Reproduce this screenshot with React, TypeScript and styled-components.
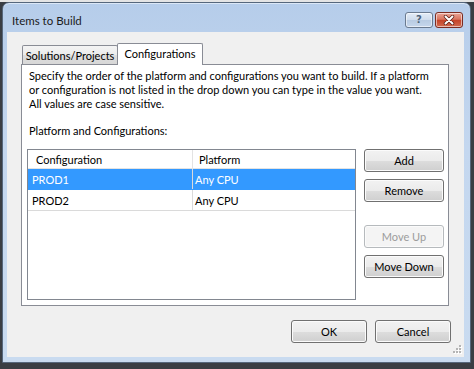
import React from "react";
import styled, { createGlobalStyle, css } from "styled-components";

const GlobalStyle = createGlobalStyle`
  html, body {
    margin: 0;
    padding: 0;
  }
  body {
    width: 474px;
    height: 369px;
    overflow: hidden;
    background: linear-gradient(#e4e4e4 0, #e4e4e4 2px, #3a3e44 2px);
    font-family: Lato, "Open Sans", "DejaVu Sans", sans-serif;
    font-size: 11px;
    color: #000;
  }
`;

const Desktop = styled.div`
  padding: 2px 0 0 2px;
`;

const Window = styled.div`
  width: 469px;
  box-sizing: border-box;
  border: 1px solid #56677c;
  border-radius: 7px 7px 0 0;
  background: linear-gradient(#b6cdea 0%, #c4d7ef 40%, #c9dbf0 100%);
  padding: 0 6px 5px 4px;
  box-shadow: inset 0 1px 0 #dbe7f6;
`;

const TitleBar = styled.div`
  height: 29px;
  box-sizing: border-box;
  padding: 5px 1px 0 5px;
  display: flex;
  align-items: center;
  justify-content: space-between;
`;

const Caption = styled.span`
  font-size: 11.5px;
  color: #1b1b1b;
  padding-top: 1px;
`;

const CaptionButtons = styled.div`
  display: flex;
  gap: 2px;
`;

const CaptionButton = styled.div<{ $close?: boolean }>`
  width: 28px;
  height: 16px;
  box-sizing: border-box;
  border: 1px solid #6a7a8f;
  border-radius: 3px;
  display: flex;
  align-items: center;
  justify-content: center;
  box-shadow: inset 0 0 0 1px rgba(255, 255, 255, 0.55);
  background: linear-gradient(#e3ecf7 0%, #cfdcec 50%, #b8cbe2 51%, #c6d7ec 100%);
  color: #4d6279;
  font-family: "DejaVu Sans", sans-serif;
  font-size: 10px;
  font-weight: bold;
  line-height: 1;
  ${(p) =>
    p.$close &&
    css`
      border-color: #7b2c22;
      background: linear-gradient(#e9a597 0%, #d9745f 45%, #c54328 52%, #d16a4f 100%);
    `}
`;

const Client = styled.div`
  position: relative;
  background: #f0f0f0;
  padding: 11px 13px 14px 14px;
  display: flex;
  flex-direction: column;
`;

const TabStrip = styled.div`
  height: 21px;
  display: flex;
  align-items: flex-end;
  padding-left: 2px;
  position: relative;
  z-index: 1;
`;

const Tab = styled.div<{ $active?: boolean; $w: number }>`
  width: ${(p) => p.$w}px;
  box-sizing: border-box;
  height: 19px;
  border: 1px solid #898c95;
  border-bottom: none;
  border-radius: 2px 2px 0 0;
  background: linear-gradient(#f4f4f4 0%, #ebebeb 50%, #dedede 51%, #d7d7d7 100%);
  display: flex;
  align-items: center;
  justify-content: center;
  margin-left: -1px;
  ${(p) =>
    p.$active &&
    css`
      height: 22px;
      margin-bottom: -1px;
      background: #fff;
      padding-bottom: 2px;
    `}
`;

const TabPanel = styled.div`
  margin-right: 2px;
  border: 1px solid #898c95;
  background: #fff;
  padding: 4px 4px 5px 5px;
  display: flex;
  flex-direction: column;
`;

const Text = styled.p<{ $top?: number }>`
  margin: ${(p) => p.$top ?? 0}px 0 0 2px;
  line-height: 14px;
  white-space: nowrap;
`;

const ListArea = styled.div`
  margin-top: 11px;
  display: flex;
  align-items: flex-start;
`;

const ListView = styled.div`
  width: 329px;
  height: 151px;
  box-sizing: border-box;
  border: 1px solid #828790;
  background: #fff;
`;

const Row = styled.div<{ $header?: boolean; $selected?: boolean }>`
  display: flex;
  height: 21px;
  box-sizing: border-box;
  border-bottom: 1px solid #dadada;
  ${(p) =>
    p.$header &&
    css`
      height: 19px;
      border-bottom-color: #e3e3e3;
    `}
  ${(p) =>
    p.$selected &&
    css`
      background: #3399ff;
      color: #fff;
      border-bottom-color: #3399ff;
    `}
`;

const Cell = styled.div<{ $first?: boolean; $header?: boolean }>`
  display: flex;
  align-items: center;
  box-sizing: border-box;
  padding-left: ${(p) => (p.$header ? (p.$first ? 8 : 6) : p.$first ? 4 : 2)}px;
  ${(p) =>
    p.$first
      ? css`
          width: 165px;
          border-right: 1px solid ${p.$header ? "#e3e3e3" : "#dadada"};
        `
      : css`
          flex: 1;
        `}
`;

const ButtonColumn = styled.div`
  margin-left: 8px;
  display: flex;
  flex-direction: column;
`;

const Button = styled.button<{ $w: number; $top?: number }>`
  width: ${(p) => p.$w}px;
  height: 23px;
  margin-top: ${(p) => p.$top ?? 0}px;
  box-sizing: border-box;
  padding: 0;
  border: 1px solid #707070;
  border-radius: 3px;
  background: linear-gradient(#f2f2f2 0%, #ebebeb 50%, #dddddd 51%, #cfcfcf 100%);
  box-shadow: inset 0 0 0 1px #fbfbfb;
  font-family: inherit;
  font-size: 11px;
  color: #000;
  &:disabled {
    border-color: #b6babd;
    background: #f4f4f4;
    color: #9c9c9c;
  }
`;

const Footer = styled.div`
  margin-top: 14px;
  display: flex;
  justify-content: flex-end;
  gap: 8px;
`;

const SizeGrip = styled.svg`
  position: absolute;
  right: 2px;
  bottom: 2px;
`;

const CloseGlyph = () => (
  <svg width="12" height="10" viewBox="0 0 12 10">
    <path d="M2.5 1.5 L9.5 8.5 M9.5 1.5 L2.5 8.5" stroke="#5a1d14" strokeWidth="3.4" strokeLinecap="round" />
    <path d="M2.5 1.5 L9.5 8.5 M9.5 1.5 L2.5 8.5" stroke="#fff" strokeWidth="2" strokeLinecap="round" />
  </svg>
);

const Grip = () => (
  <SizeGrip width="10" height="10" viewBox="0 0 10 10">
    {[
      [7, 0],
      [4, 3],
      [7, 3],
      [1, 6],
      [4, 6],
      [7, 6],
    ].map(([x, y]) => (
      <g key={`${x}-${y}`}>
        <rect x={x + 1} y={y + 1} width="2" height="2" fill="#fff" />
        <rect x={x} y={y} width="2" height="2" fill="#b4b4b4" />
      </g>
    ))}
  </SizeGrip>
);

const rows = [
  { config: "PROD1", platform: "Any CPU", selected: true },
  { config: "PROD2", platform: "Any CPU", selected: false },
];

export default function App() {
  return (
    <>
      <GlobalStyle />
      <Desktop>
        <Window>
          <TitleBar>
            <Caption>Items to Build</Caption>
            <CaptionButtons>
              <CaptionButton>?</CaptionButton>
              <CaptionButton $close>
                <CloseGlyph />
              </CaptionButton>
            </CaptionButtons>
          </TitleBar>
          <Client>
            <TabStrip>
              <Tab $w={96}>Solutions/Projects</Tab>
              <Tab $w={86} $active>
                Configurations
              </Tab>
            </TabStrip>
            <TabPanel>
              <Text>
                Specify the order of the platform and configurations you want to build. If a platform
                <br />
                or configuration is not listed in the drop down you can type in the value you want.
                <br />
                All values are case sensitive.
              </Text>
              <Text $top={13}>Platform and Configurations:</Text>
              <ListArea>
                <ListView>
                  <Row $header>
                    <Cell $header $first>
                      Configuration
                    </Cell>
                    <Cell $header>Platform</Cell>
                  </Row>
                  {rows.map((r) => (
                    <Row key={r.config} $selected={r.selected}>
                      <Cell $first>{r.config}</Cell>
                      <Cell>{r.platform}</Cell>
                    </Row>
                  ))}
                </ListView>
                <ButtonColumn>
                  <Button $w={80}>Add</Button>
                  <Button $w={80} $top={7}>
                    Remove
                  </Button>
                  <Button $w={80} $top={23} disabled>
                    Move Up
                  </Button>
                  <Button $w={80} $top={7}>
                    Move Down
                  </Button>
                </ButtonColumn>
              </ListArea>
            </TabPanel>
            <Footer>
              <Button $w={76}>OK</Button>
              <Button $w={76}>Cancel</Button>
            </Footer>
            <Grip />
          </Client>
        </Window>
      </Desktop>
    </>
  );
}
